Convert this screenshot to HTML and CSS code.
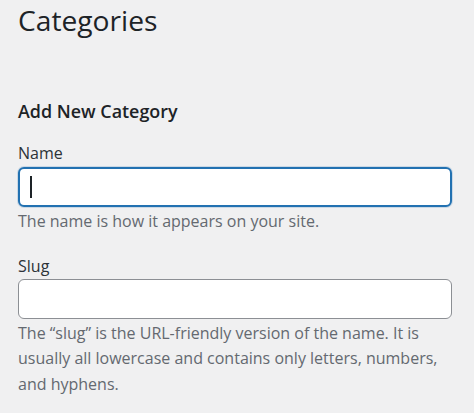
FILE: index.html
```html
<!DOCTYPE html>
<html lang="en">
<head>
<meta charset="utf-8">
<title>Categories</title>
<link rel="stylesheet" href="styles.css">
</head>
<body>
<div class="wrap">
  <h1 class="page-title">Categories</h1>
  <h2 class="section-title">Add New Category</h2>
  <form class="form">
    <div class="field field-name">
      <label class="label">Name</label>
      <div class="input input-focus"><span class="caret"></span></div>
      <p class="desc">The name is how it appears on your site.</p>
    </div>
    <div class="field field-slug">
      <label class="label">Slug</label>
      <div class="input"></div>
      <p class="desc">The “slug” is the URL-friendly version of the name. It is usually all lowercase and contains only letters, numbers, and hyphens.</p>
    </div>
  </form>
</div>
</body>
</html>
```
FILE: styles.css
```css
html, body {
  margin: 0;
  padding: 0;
  background: #f0f0f1;
}
body {
  font-family: "Open Sans", "Noto Sans", sans-serif;
  color: #1d2327;
}
.wrap {
  padding: 0 22px 0 18px;
}
.page-title {
  margin: 0;
  font-size: 28.2px;
  font-weight: 400;
  line-height: 40px;
  color: #1d2327;
}
.section-title {
  margin: 58px 0 0;
  font-size: 17.9px;
  font-weight: 600;
  line-height: 26px;
  color: #1d2327;
}
.form {
  margin: 0;
}
.field-name {
  margin-top: 16px;
}
.field-slug {
  margin-top: 18px;
}
.label {
  display: block;
  font-size: 16px;
  line-height: 26px;
  color: #2c3338;
}
.input {
  box-sizing: border-box;
  height: 40px;
  width: 434px;
  background: #fff;
  border: 1px solid #8c8f94;
  border-radius: 6px;
  display: flex;
  align-items: center;
  padding-left: 11px;
}
.field-name .input {
  margin-top: 1px;
}
.input-focus {
  border: 2px solid #2271b1;
  box-shadow: 0 0 0 1px rgba(34, 113, 177, 0.18);
  padding-left: 10px;
}
.caret {
  display: block;
  width: 2px;
  height: 22px;
  background: #1d2327;
}
.desc {
  margin: 2px 0 0;
  font-size: 16px;
  line-height: 25.5px;
  color: #646970;
}
```
